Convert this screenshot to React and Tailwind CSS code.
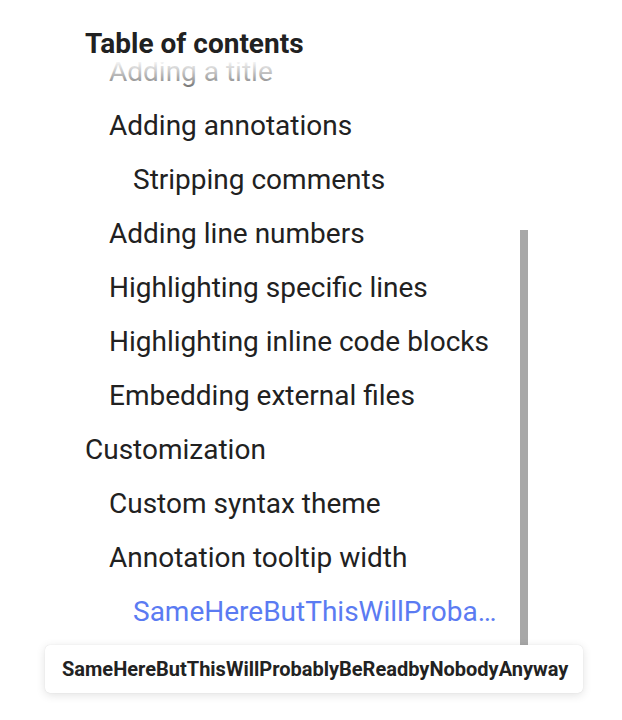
export default function App() {
  const items = [
    { t: "Adding a title", l: 1 },
    { t: "Adding annotations", l: 1 },
    { t: "Stripping comments", l: 2 },
    { t: "Adding line numbers", l: 1 },
    { t: "Highlighting specific lines", l: 1 },
    { t: "Highlighting inline code blocks", l: 1 },
    { t: "Embedding external files", l: 1 },
    { t: "Customization", l: 0 },
    { t: "Custom syntax theme", l: 1 },
    { t: "Annotation tooltip width", l: 1 },
    { t: "SameHereButThisWillProbablyBeReadbyNobodyAnyway", l: 2, active: true },
  ];
  const pad = ["pl-0", "pl-[24px]", "pl-[48px]"];
  return (
    <div
      className="relative w-[622px] h-[720px] bg-white overflow-hidden text-[#212121]"
      style={{ fontFamily: "Roboto, 'Noto Sans', sans-serif" }}
    >
      <div className="pl-[85px] pt-[26px]">
        <div className="text-[28px] font-bold leading-[36px]">Table of contents</div>
        <div className="relative w-[416px] h-[600px] overflow-hidden">
          <ul className="-mt-[17px]">
            {items.map((it, i) => (
              <li
                key={i}
                className={`h-[54px] flex items-center text-[28px] ${pad[it.l]} ${it.active ? "text-[#5b7bf2]" : ""}`}
              >
                <span className="block truncate w-full">{it.t}</span>
              </li>
            ))}
          </ul>
          <div className="absolute left-0 right-0 top-0 h-[38px] bg-gradient-to-b from-white/95 via-white/55 to-white/0" />
        </div>
      </div>
      <div className="absolute left-[520px] top-[230px] w-[8px] h-[430px] bg-[#a8a8a8]" />
      <div className="absolute left-[45px] top-[645px] w-[538px] h-[48px] rounded-[5px] bg-white shadow-[0_2px_10px_rgba(0,0,0,0.12),0_0_1px_rgba(0,0,0,0.15)] flex items-center pl-[17px]">
        <span className="text-[20px] font-bold text-[#222]">SameHereButThisWillProbablyBeReadbyNobodyAnyway</span>
      </div>
    </div>
  );
}
